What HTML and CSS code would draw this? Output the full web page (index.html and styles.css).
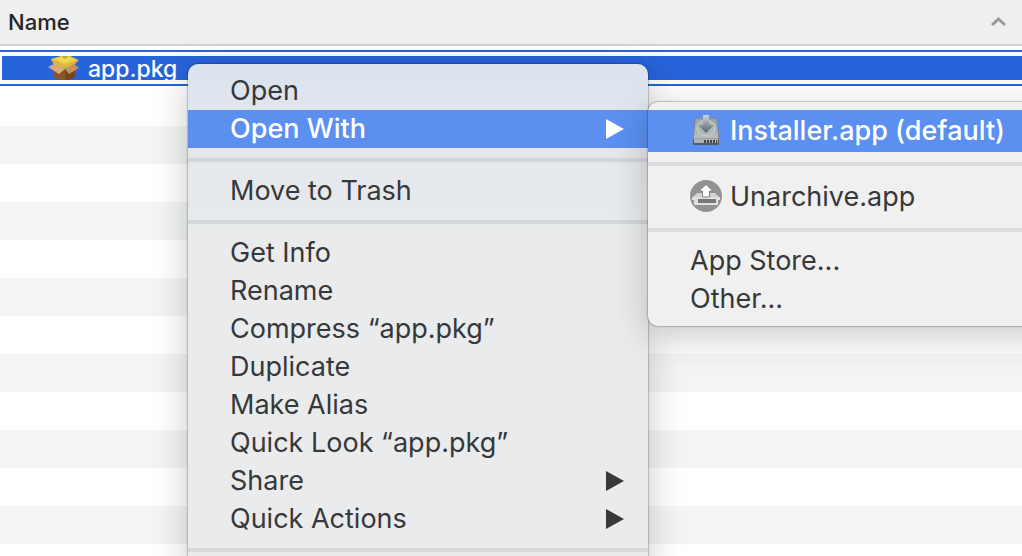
FILE: index.html
```
<!DOCTYPE html>
<html lang="en">
<head>
  <meta charset="UTF-8">
  <meta name="viewport" content="width=device-width, initial-scale=1.0">
  <title>Finder</title>
  <link rel="stylesheet" href="styles.css">
</head>
<body>

<table class="files">
  <thead>
    <tr>
      <th>
        <div class="column-head">
          <span>Name</span>
          <svg class="sort" viewBox="0 0 16 10"><path d="M2 8 L8.5 2 L15 8"/></svg>
        </div>
      </th>
    </tr>
  </thead>
  <tbody>
    <tr>
      <td>
        <div class="selected">
          <div class="file">
            <svg class="file-icon" viewBox="0 0 32 24">
              <path fill="#8a5527" d="M5 12 L17 14 V26 L5 21z"/>
              <path fill="#75441d" d="M17 14 L27 12 V21 L17 26z"/>
              <path fill="#c79a6e" d="M3 3 L12 1 L8 7 L6 8z"/>
              <path fill="#c79a6e" d="M22 1 L31 4 L26 9z"/>
              <path fill="#d8b440" d="M3 3 L6 9 L17 13 L26 9 L30 4z"/>
              <path fill="#e9c93f" d="M3 3 L13 0 H22 L30 4 L17 9z"/>
              <path fill="#f0d855" d="M7 3 L14 1 H21 L26 3 L17 7z"/>
              <path fill="#dba77c" d="M6 8 L0 11 L11 18 L17 13z"/>
              <path fill="#c98f62" d="M17 13 L21 18 L31 12 L26 8z"/>
              <path fill="#a9b04c" d="M15 0 H20 L18 3 L15 2z"/>
            </svg>
            <span>app.pkg</span>
          </div>
        </div>
      </td>
    </tr>
  </tbody>
</table>

<ul class="menu context">
  <li><button>Open</button></li>
  <li>
    <button class="active">Open With <span class="arrow"></span></button>
    <ul class="menu submenu">
      <li>
        <button class="app active">
          <svg class="app-icon" viewBox="0 0 32 32">
            <defs>
              <linearGradient id="drive" x1="0" y1="0" x2="0" y2="1">
                <stop offset="0" stop-color="#98a2a6"/>
                <stop offset="1" stop-color="#b9bfc0"/>
              </linearGradient>
              <linearGradient id="down" x1="0" y1="0" x2="0" y2="1">
                <stop offset="0" stop-color="#c8d3da"/>
                <stop offset="1" stop-color="#59636a"/>
              </linearGradient>
            </defs>
            <path fill="#555d62" d="M3 24 H29 V30 Q29 31 28 31 H4 Q3 31 3 30z"/>
            <path fill="url(#drive)" stroke="#7d878c" d="M7 4 H25 Q27 4 27 6 L29 25 H3 L5 6 Q5 4 7 4z"/>
            <ellipse cx="16" cy="14" rx="9" ry="8" fill="#b0b8ba" stroke="#ccd2d3"/>
            <path fill="#aeb4b6" d="M4 25 H28 V29 H4z"/>
            <path fill="#444" d="M14 26 H27 V29 H14z"/>
            <path stroke="#aeb4b6" d="M16.5 26 V29 M19.5 26 V29 M22.5 26 V29 M25.5 26 V29"/>
            <path fill="url(#down)" d="M13 1 H19 V11 H24 L16 19 L8 11 H13z"/>
          </svg>
          Installer.app (default)
        </button>
      </li>
      <li class="separator"></li>
      <li>
        <button class="app">
          <svg class="app-icon" viewBox="0 0 32 32">
            <circle cx="16" cy="16" r="16" fill="#929292"/>
            <path fill="#d2d2d2" d="M7 13 H25 L30 18 H2z"/>
            <path fill="#e0e0e0" d="M2 17 H30 V20 H28 V24 Q28 25 27 25 H5 Q4 25 4 24 V20 H2z"/>
            <path fill="#777" d="M8 19 H26 V23 H8z"/>
            <path fill="#fff" stroke="#858585" d="M16 4.500 L23 11 H19.500 V17 H12.500 V11 H9z"/>
          </svg>
          Unarchive.app
        </button>
      </li>
      <li class="separator"></li>
      <li><button>App Store...</button></li>
      <li><button>Other...</button></li>
    </ul>
  </li>
  <li class="separator"></li>
  <li><button>Move to Trash</button></li>
  <li class="separator"></li>
  <li><button>Get Info</button></li>
  <li><button>Rename</button></li>
  <li><button>Compress “app.pkg”</button></li>
  <li><button>Duplicate</button></li>
  <li><button>Make Alias</button></li>
  <li><button>Quick Look “app.pkg”</button></li>
  <li><button>Share <span class="arrow"></span></button></li>
  <li><button>Quick Actions <span class="arrow"></span></button></li>
  <li class="separator"></li>
</ul>

</body>
</html>
```
FILE: styles.css
```
* {
  box-sizing: border-box;
}
body {
  margin: 0;
  min-height: 100vh;
  overflow: hidden;
  font-family: Inter, "Liberation Sans", sans-serif;
  background: repeating-linear-gradient(#fff 0 38px, #f3f5f5 38px 76px) 0 88px;
  background-repeat: no-repeat;
}

/* file list */
.files {
  width: 100%;
  border-collapse: collapse;
}
.files th,
.files td {
  padding: 0;
}
.column-head {
  display: flex;
  align-items: center;
  justify-content: space-between;
  height: 46px;
  padding: 0 16px 0 8px;
  border-bottom: 2px solid #d2d2d2;
  background-color: #efefef;
  color: #262626;
  font-size: 22px;
  font-weight: 500;
}
.sort {
  width: 16px;
  height: 10px;
  fill: none;
  stroke: #999;
  stroke-width: 3;
}
.selected {
  margin-top: 4px;
  padding: 4px 0 4px 2px;
  border-top: 2px solid #2763d9;
  border-bottom: 2px solid #2763d9;
  background-color: #fff;
}
.file {
  display: flex;
  align-items: center;
  gap: 8px;
  height: 24px;
  padding-left: 46px;
  overflow: hidden;
  background-color: #2763d9;
  color: #fff;
  font-size: 23px;
  font-weight: 500;
  line-height: 28px;
}
.file span {
  padding-top: 2px;
}
.file-icon {
  width: 32px;
  height: 24px;
}

/* menus */
.menu {
  position: absolute;
  width: 460px;
  margin: 0;
  padding: 8px 0;
  list-style: none;
  border-radius: 10px;
  box-shadow: 0 0 1px 1px rgba(0, 0, 0, 0.2), 0 10px 36px rgba(0, 0, 0, 0.22);
}
.menu li {
  position: relative;
}
.context {
  top: 64px;
  left: 188px;
  background: linear-gradient(#dae3ef, #e4e8ec 90px, #e9ebec 180px);
}
.submenu {
  top: -8px;
  left: 100%;
  background-color: #f0f0f0;
}
.menu button {
  display: flex;
  align-items: center;
  width: 100%;
  height: 38px;
  padding: 0 24px 2px 42px;
  border: 0;
  background: none;
  color: #373839;
  font-family: inherit;
  font-size: 27px;
  text-align: left;
  white-space: nowrap;
}
.menu .app {
  gap: 8px;
  height: 42px;
}
.menu .active {
  background-color: #5b8ff0;
  color: #fff;
  font-weight: 500;
}
.app-icon {
  width: 32px;
  height: 32px;
}
.arrow {
  margin-top: 2px;
  margin-left: auto;
  border-left: 18px solid currentColor;
  border-top: 10px solid transparent;
  border-bottom: 10px solid transparent;
}
.separator {
  height: 24px;
  padding: 10px 0;
}
.separator::before {
  content: "";
  display: block;
  height: 4px;
  background-color: rgba(0, 0, 0, 0.08);
}
```
